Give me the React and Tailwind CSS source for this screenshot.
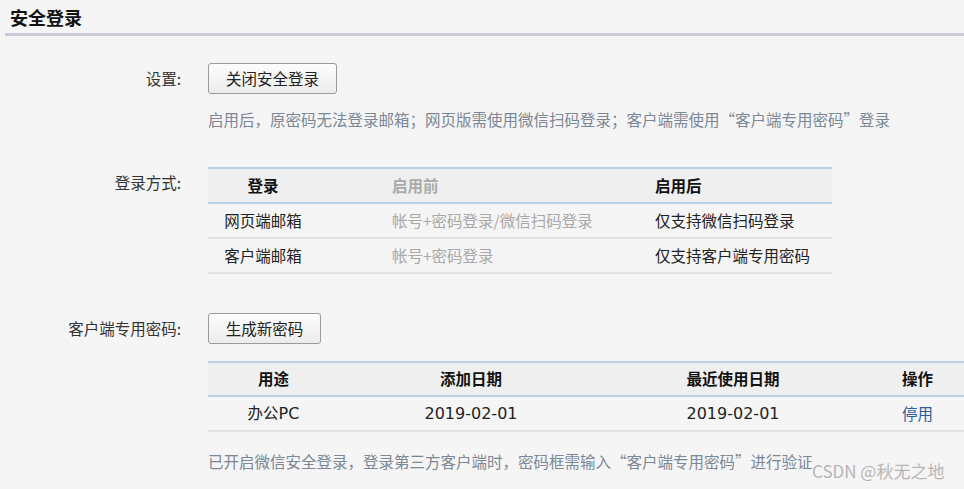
import React from "react";

const font = { fontFamily: '"Noto Sans CJK SC", "Noto Sans", sans-serif' };

// Label column + content column
const Row = ({ label, children, className = "" }) => (
  <div className={`flex ${className}`}>
    <div className="w-[181px] shrink-0 text-right text-[15.5px] text-[#333] leading-[30px]">
      {label}
    </div>
    <div className="ml-[27px] flex-1">{children}</div>
  </div>
);

const Button = ({ children, w }) => (
  <button
    className={`${w} h-[31px] rounded-[3px] border border-[#9a9a9a] bg-gradient-to-b from-[#fdfdfd] to-[#ececec] text-[15.5px] text-[#222] leading-none`}
  >
    {children}
  </button>
);

function LoginTable() {
  const rows = [
    ["网页端邮箱", "帐号+密码登录/微信扫码登录", "仅支持微信扫码登录"],
    ["客户端邮箱", "帐号+密码登录", "仅支持客户端专用密码"],
  ];
  return (
    <div className="w-[624px] text-[15.5px]">
      <div className="flex h-[37px] items-center bg-[#efefef] border-t-2 border-b-2 border-[#bcd0e4] font-bold">
        <div className="w-[110px] text-center text-[#111]">登录</div>
        <div className="w-[337px] pl-[74px] text-[#aaa]">启用前</div>
        <div className="flex-1 text-[#111]">启用后</div>
      </div>
      {rows.map((r) => (
        <div key={r[0]} className="flex h-[35px] items-center border-b-2 border-[#dde1e5]">
          <div className="w-[110px] text-center text-[#222]">{r[0]}</div>
          <div className="w-[337px] pl-[74px] text-[#a8a8a8]">{r[1]}</div>
          <div className="flex-1 text-[#222]">{r[2]}</div>
        </div>
      ))}
    </div>
  );
}

function PasswordTable() {
  const date = { fontFamily: '"DejaVu Sans", sans-serif' };
  return (
    <div className="mt-[17px] mr-[-10px] text-[15.5px]">
      <div className="grid grid-cols-[131px_264px_260px_1fr] h-[36px] items-center bg-[#efefef] border-t-2 border-b-2 border-[#bcd0e4] font-bold text-[#111]">
        <div className="text-center">用途</div>
        <div className="text-center">添加日期</div>
        <div className="text-center">最近使用日期</div>
        <div className="pl-[39px]">操作</div>
      </div>
      <div className="grid grid-cols-[131px_264px_260px_1fr] h-[35px] items-center border-b-2 border-[#dde1e5] text-[#222]">
        <div className="text-center">
          办公<span style={date} className="text-[16px]">PC</span>
        </div>
        <div className="text-center text-[16px]" style={date}>2019-02-01</div>
        <div className="text-center text-[16px]" style={date}>2019-02-01</div>
        <div className="pl-[39px] text-[#2b5b9b]">停用</div>
      </div>
    </div>
  );
}

export default function App() {
  return (
    <div className="w-[964px] h-[489px] overflow-hidden bg-[#f5f5f5] relative" style={font}>
      <div className="pl-[10px] pt-[4px] h-[33px] text-[18px] font-bold text-[#111] leading-[26px]">
        安全登录
      </div>
      <div className="ml-[5px] h-[3px] bg-[#cbcbd9]" />

      <Row label="设置:" className="mt-[27px]">
        <Button w="w-[129px]">关闭安全登录</Button>
        <p className="mt-[14px] text-[15.5px] text-[#7b8794] leading-[22px] whitespace-nowrap">
          启用后，原密码无法登录邮箱；网页版需使用微信扫码登录；客户端需使用“客户端专用密码”登录
        </p>
      </Row>

      <Row label="登录方式:" className="mt-[37px]">
        <LoginTable />
      </Row>

      <Row label="客户端专用密码:" className="mt-[39px]">
        <Button w="w-[113px]">生成新密码</Button>
        <PasswordTable />
        <p className="mt-[18px] text-[15.5px] text-[#7b8794] leading-[22px] whitespace-nowrap">
          已开启微信安全登录，登录第三方客户端时，密码框需输入“客户端专用密码”进行验证
        </p>
      </Row>

      <div className="absolute left-[812px] top-[458px] text-[17px] text-[#b5b5b5] whitespace-nowrap">
        CSDN @秋无之地
      </div>
    </div>
  );
}
